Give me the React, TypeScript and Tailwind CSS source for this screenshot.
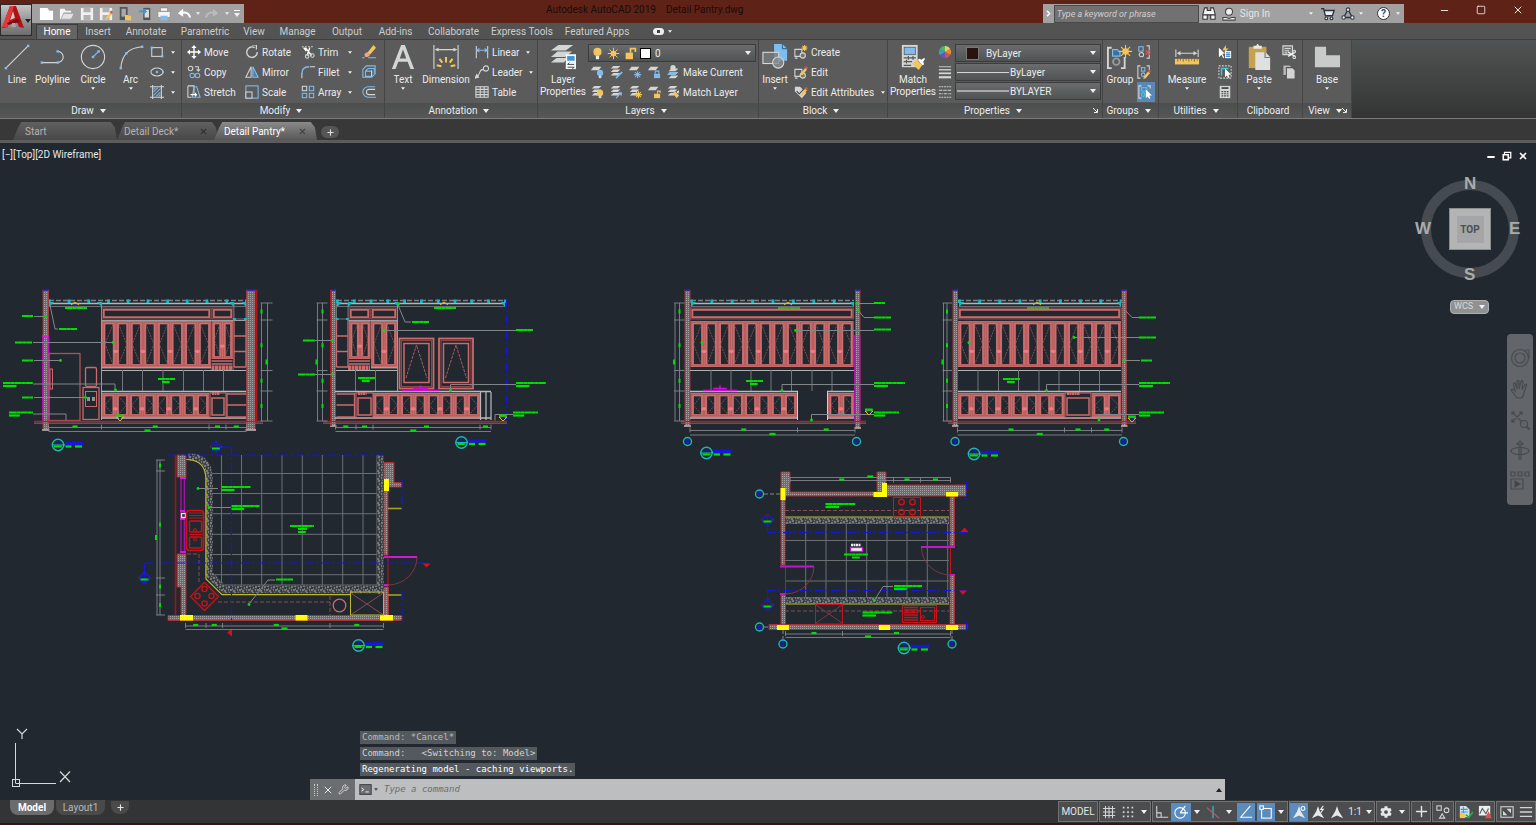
import type { ReactNode } from "react";
import { ChevronRight, Minus, Plus, Square, Wrench, X } from "lucide-react";
import { FaCog } from "react-icons/fa";

const G = "#d4d6d6";
const B = "#7fbdf0";
const Y = "#f3c55c";
const R = "#d9544f";

/* ---------- icons ---------- */

function Ico({ w = 14, h = w, vb = "0 0 16 16", children }: { w?: number; h?: number; vb?: string; children: ReactNode }) {
  return (
    <svg width={w} height={h} viewBox={vb} fill="none" stroke={G} strokeWidth="1.2" className="shrink-0" aria-hidden>
      {children}
    </svg>
  );
}

function Dot({ x, y }: { x: number; y: number }) {
  return <rect x={x - 1.3} y={y - 1.3} width="2.6" height="2.6" fill={B} stroke="none" />;
}

function Caret({ big }: { big?: boolean }) {
  return (
    <svg width={big ? 6 : 4} height={big ? 4 : 3} viewBox="0 0 6 4" className="shrink-0" aria-hidden>
      <path d="M0 0h6L3 4z" fill="#f0f0f0" />
    </svg>
  );
}

const Sheets = () => (
  <g fill={G} stroke="none">
    <path d="M5 1h8l-3 3H2zM5 5h8l-3 3H2zM5 9h8l-3 3H2z" />
  </g>
);
const Sheet = () => <path d="M4 2h9l-3 4H1z" fill={G} stroke="none" />;
const Bulb = ({ c = Y }: { c?: string }) => (
  <g stroke="none">
    <circle cx="11.5" cy="9" r="3.6" fill={c} />
    <path d="M10 12h3v3h-3z" fill={G} />
  </g>
);
const Sun = ({ cx = 12, cy = 11, r = 2 }: { cx?: number; cy?: number; r?: number }) => (
  <g stroke={Y} fill={Y}>
    <circle cx={cx} cy={cy} r={r} stroke="none" />
    <path d={`M${cx} ${cy - 2 * r}V${cy + 2 * r}M${cx - 2 * r} ${cy}H${cx + 2 * r}M${cx - 1.4 * r} ${cy - 1.4 * r}L${cx + 1.4 * r} ${cy + 1.4 * r}M${cx + 1.4 * r} ${cy - 1.4 * r}L${cx - 1.4 * r} ${cy + 1.4 * r}`} />
  </g>
);
const Pencil = () => (
  <g stroke="none">
    <path d="M8 10l5-6 2 2-5 6-3 1z" fill={Y} />
    <path d="M12 4l2-2 2 2-1.5 2z" fill={R} />
  </g>
);

const icons: Record<string, ReactNode> = {
  line: <><path d="M2 26L26 2" /><Dot x={2} y={26} /><Dot x={26} y={2} /></>,
  polyline: <><path d="M2 20h17a6 6 0 0 0 0-12" /><Dot x={2} y={20} /><Dot x={19} y={20} /><Dot x={19} y={8} /></>,
  circle: <><circle cx="14" cy="14" r="12.5" /><path d="M14 14l6-6" stroke={B} /><Dot x={14} y={14} /><Dot x={20} y={8} /></>,
  arc: <><path d="M3 26C4 12 12 4 26 3" /><Dot x={3} y={26} /><Dot x={9} y={10} /><Dot x={26} y={3} /></>,
  rect: <><rect x="2" y="3" width="12" height="10" /><Dot x={2} y={3} /><Dot x={14} y={13} /></>,
  ellipse: <><ellipse cx="8" cy="8" rx="7" ry="4.5" /><Dot x={8} y={8} /><Dot x={15} y={8} /></>,
  hatch: <><path d="M3 0v16M13 0v16M0 2h16M0 14h16" /><path d="M4 8l5-5M4 12l8-8M7 13l5-5M4 5l2-2M10 13l2-2" stroke={B} /></>,
  move: <><path d="M8 1v14M1 8h14" stroke="#fff" strokeWidth="1.6" /><path d="M8 0l3 3.5H5zM8 16l3-3.5H5zM0 8l3.5-3v6zM16 8l-3.5-3v6z" fill="#fff" stroke="none" /></>,
  copy: <><circle cx="4" cy="4" r="2.6" /><path d="M9 2h4v5M11 5l2 2 2-2" /><circle cx="6" cy="12" r="2.6" stroke={B} /><circle cx="12" cy="12" r="2.6" stroke={B} /></>,
  stretch: <><path d="M1 1h7v9M1 1v13h4" /><path d="M8 2h3l4 12H6z" stroke={B} /><path d="M4 11h7M9 9l2 2-2 2" stroke="#fff" /></>,
  rotate: <><path d="M11 3a6 6 0 1 0 3 5" strokeWidth="1.6" /><path d="M8 0h5v5" strokeWidth="1.4" /></>,
  mirror: <><path d="M7 2v12H1z" /><path d="M9 2v12h6z" stroke={B} fill="#4f7ea8" /></>,
  scale: <><rect x="1" y="1" width="14" height="14" stroke={B} /><rect x="1" y="8" width="7" height="7" fill="#5b5b5b" /></>,
  trim: <><path d="M1 2h14" strokeDasharray="2 1.5" /><path d="M5 3l7 9M10 3L7 12M3 3l3 4" stroke="#fff" strokeWidth="1.6" /><circle cx="7" cy="13" r="2" /><circle cx="13" cy="12" r="2" /></>,
  fillet: <><path d="M1 15V9" stroke={G} /><path d="M1 10C1 5 4 2 9 2" stroke={B} strokeWidth="1.5" /><path d="M10 2h6" /></>,
  array: <><rect x="1.5" y="1.5" width="5" height="5" /><rect x="9.5" y="1.5" width="5" height="5" stroke={B} /><rect x="1.5" y="9.5" width="5" height="5" stroke={B} /><rect x="9.5" y="9.5" width="5" height="5" stroke={B} /></>,
  erase: <><path d="M6 9l7-9 3 3-7 8z" fill={Y} stroke="none" /><path d="M3 10l3-2 3 4-3 2-3-1z" fill="#f0a090" stroke="none" /><path d="M0 14.5h3M7 14.5h9" stroke={B} /></>,
  explode: <><path d="M1 5l4-4h10v9l-4 4H1z" stroke={B} /><path d="M4 7h7v6H4zM4 7l3-3h7v6" stroke={B} /><path d="M11 6V13" /></>,
  offset: <><path d="M15 2H7a6 6 0 0 0 0 12h9" stroke={B} /><path d="M15 5H8a3 3 0 0 0 0 6h7" /></>,
  text: <path d="M2 27L12 1h4l10 26h-4l-3-8H9l-3 8zM10.5 15.5h7L14 6z" fill={G} fillRule="evenodd" stroke="none" />,
  dim: <><path d="M1 1v26M27 1v26M3 6h22" /><path d="M2 6l4-2v4zM26 6l-4-2v4z" fill={G} stroke="none" /><path d="M14 14v6M7 16l3 4M21 16l-3 4M4 23l5 1M24 23l-5 1" stroke={Y} strokeWidth="2.2" /></>,
  linear: <><path d="M1.5 1v14M14.5 1v14" /><path d="M2 6h12M5 4L2 6l3 2M11 4l3 2-3 2" stroke={B} /></>,
  leader: <><circle cx="12.5" cy="4" r="3" /><path d="M9.5 5C4 5 7 10 2 14" /><path d="M0 15l2-4 2 3z" fill={G} /></>,
  table: <><rect x="1" y="2" width="14" height="12" /><path d="M1 5h14M1 8h14M1 11h14M6 2v12M10.5 2v12" /></>,
  layerProps: <><g fill={G} stroke="none"><path d="M9 1h16l-8 6H1zM8 8h16l-8 6H1zM7 15h12l-4 5H1z" /></g><rect x="17" y="11" width="11" height="16" fill="#f4f6f8" stroke="none" /><rect x="18.5" y="13" width="8" height="5" fill="#3f94d8" stroke="none" /><path d="M19 22h7M21 20l-2 2M19 25h7M24 27l2-2" stroke="#333" strokeWidth=".9" /></>,
  layerOff: <><Sheet /><Bulb c={B} /></>,
  layerIsolate: <><Sheets /><path d="M8 15l7-7" stroke={B} strokeWidth="2" /></>,
  layerFreeze: <><Sheet /><path d="M11 7v8M7 11h8M8 8l6 6M14 8l-6 6" stroke={B} /></>,
  layerLock: <><Sheet /><rect x="8" y="10" width="7" height="5" fill={B} stroke="none" /><path d="M9.5 10V7h4v3" stroke={B} /></>,
  makeCurrent: <><g transform="translate(1 3)"><Sheets /></g><path d="M4 8h9l-3 3H1z" fill={B} stroke="none" /><circle cx="8" cy="3" r="3" fill={G} stroke="none" /></>,
  layerOn: <><Sheets /><Bulb /></>,
  layerUnisolate: <><Sheets /><path d="M8 15l6-6M11 9h3v3" stroke={B} strokeWidth="1.5" /></>,
  layerThaw: <><Sheets /><Sun /></>,
  layerUnlock: <><Sheet /><rect x="8" y="10" width="7" height="5" fill={Y} stroke="none" /><path d="M12 10V7h3v2" stroke={Y} /></>,
  matchLayer: <><Sheets /><path d="M8 9l2-2 5 5-3 3z" fill={Y} stroke="none" /><path d="M12 8l3-2-1 4z" fill="#fff" stroke="none" /></>,
  insert: <><path d="M13 0h9l5 5v13H13z" fill={B} stroke="none" /><path d="M22 0v5h5" stroke="#3c6d96" /><rect x="1" y="9" width="17" height="12" fill="#777b7d" fillOpacity=".8" /><circle cx="17.5" cy="20" r="6" fill="#8a8e90" fillOpacity=".8" /></>,
  create: <><path d="M1 5h8v8H1zM1 15h3" /><circle cx="10" cy="12" r="3" fill="#777" /><Sun cx={12} cy={3.5} r={1.7} /></>,
  edit: <><path d="M1 5h8v8H1zM1 15h3" /><circle cx="10" cy="12" r="3" fill="#777" /><g transform="translate(0 -1)"><Pencil /></g></>,
  editAttr: <><path d="M1 2h6l7 7-5 6-8-8z" fill={G} stroke="none" /><path d="M3 7l3 3 5-5" stroke="#444" /><Pencil /></>,
  match: <><rect x="2" y="1" width="17" height="24" fill={G} stroke="none" /><rect x="4.5" y="3.5" width="12" height="8" fill={B} stroke="#555" strokeWidth=".8" /><path d="M4 15h13M4 19h9M9 13v4M14 13v4M7 17v4M4 23h8" stroke="#555" /><path d="M13 21l5-4 6 6-4 5z" fill={Y} stroke="none" /><path d="M19 17l2-1 2 1 3-2 1 1-2 3 1 3-2 1z" fill="#fff" stroke="none" /></>,
  wheel: <g stroke="none"><path d="M8 8V1a7 7 0 0 1 6 3.5z" fill="#f0d24a" /><path d="M8 8l6-3.5a7 7 0 0 1 0 7z" fill="#e58a3c" /><path d="M8 8l6 3.5A7 7 0 0 1 8 15z" fill="#d0505c" /><path d="M8 8v7a7 7 0 0 1-6-3.5z" fill="#6c4fb8" /><path d="M8 8l-6 3.5a7 7 0 0 1 0-7z" fill="#37a0c8" /><path d="M8 8L2 4.5A7 7 0 0 1 8 1z" fill="#4bb36b" /></g>,
  weights: <><path d="M1 2h14" strokeWidth="1" /><path d="M1 5.5h14" strokeWidth="1.5" /><path d="M1 9.5h14" strokeWidth="2" /><path d="M1 14h14" strokeWidth="2.5" /></>,
  types: <><path d="M1 2h14M1 14h14" strokeDasharray="2 1" /><path d="M1 6h14" strokeDasharray="4 1" /><path d="M1 10h14" strokeDasharray="3 1 1 1" /></>,
  group: <><path d="M5 4H1v22h4M15 26h4V14" strokeWidth="2" /><path d="M6 6h5l3 3v4H6z" stroke={B} fill="#3e6f9a" /><circle cx="10" cy="19" r="3.5" strokeWidth="2" stroke="#999" /><Sun cx={20} cy={8} r={3.5} /></>,
  ungroup: <><circle cx="5" cy="11" r="2.5" /><rect x="2" y="2" width="5" height="5" stroke={B} /><path d="M11 1h3v14h-3" /><path d="M10 6l5 5M15 6l-5 5" stroke={R} strokeWidth="1.8" /></>,
  groupEdit: <><path d="M4 1H1v14h3M11 1h3v6" /><rect x="5" y="3" width="4" height="4" stroke={B} /><circle cx="7" cy="11" r="2" stroke={B} /><g transform="translate(0 3)"><Pencil /></g></>,
  groupSel: <><path d="M4 1H1v14h3M11 1h3v3" /><rect x="4" y="3" width="6" height="4" stroke="#35d0d8" /><circle cx="6" cy="11" r="2" stroke="#35d0d8" /><path d="M9 5v10l2-2 2 3 1-1-1-3h3z" fill="#fff" stroke="none" /></>,
  measure: <><path d="M2 6v8M26 6v8M4 10h20" /><path d="M3 10l4-2.5v5zM25 10l-4-2.5v5z" fill={G} stroke="none" /><rect x="1" y="16" width="26" height="6" fill={Y} stroke="none" /><path d="M4 16v3M7 16v2M10 16v3M13 16v2M16 16v3M19 16v2M22 16v3M25 16v2" stroke="#6a5520" strokeWidth=".8" /></>,
  quick: <><path d="M1 3v11l3-3 2 4 1-1-2-4h3z" fill="#fff" stroke="none" /><path d="M9 0L5 6h3L7 9l5-5H9z" fill={Y} stroke="none" /><rect x="8" y="7" width="7" height="8" fill="#fff" stroke="none" /><path d="M9 9h5M9 11h5M9 13h5" stroke="#3f94d8" /></>,
  selall: <><rect x="1" y="1" width="14" height="14" strokeDasharray="2 1.5" /><path d="M4 12V4h8" stroke="#35d0d8" strokeWidth="1.6" /><path d="M8 4v10l2-2 2 3 1-1-1-3h3z" fill="#fff" stroke="none" /></>,
  calc: <><rect x="2" y="1" width="12" height="14" fill={G} stroke="none" /><path d="M4 3.5h8" stroke="#444" strokeWidth="2" /><path d="M4 7.5h8M4 10h8M4 12.5h8" stroke="#444" strokeDasharray="2 1" strokeWidth="1.4" /></>,
  paste: <><rect x="3" y="3" width="19" height="23" fill="#c9a04e" stroke="none" /><path d="M8 5V2h3l1-2h1l1 2h3v3z" fill="#e8e8e8" stroke="none" /><path d="M10 9h11l5 5v14H10z" fill="#dfe1e1" stroke="none" /><path d="M20.5 9v5.5H26" stroke="#777" /></>,
  cut: <><path d="M1 1h11v10H1z" fill="#777" stroke={G} /><path d="M3 4h7M3 6.5h5M3 9h3" stroke={G} /><path d="M7 8l8 5M7 13l8-5" stroke="#f2f2f2" strokeWidth="1.5" /><circle cx="14" cy="14" r="1.5" /><circle cx="14" cy="7.5" r="1.5" /></>,
  clip: <><path d="M1 0h8l2 2v10H1z" fill="#bbb" stroke="#555" /><path d="M5 3h7l3 3v10H5z" fill={G} stroke="#555" /></>,
  base: <path d="M1 3h12v9h15v13H1z" fill="#c9cbcb" stroke="none" />,
};

function Big({ icon, label, caret, w }: { icon: string; label: string; caret?: boolean; w: string }) {
  return (
    <button className={`flex flex-col items-center pt-1 ${w} shrink-0`}>
      <Ico w={26} vb="0 0 28 28">{icons[icon]}</Ico>
      <span className="mt-1 leading-3">{label}</span>
      {caret && <span className="mt-px"><Caret /></span>}
    </button>
  );
}

function Small({ icon, label, caret }: { icon: string; label?: string; caret?: boolean }) {
  return (
    <button className="flex h-5 items-center gap-[3px] whitespace-nowrap" aria-label={label ?? icon}>
      <Ico>{icons[icon]}</Ico>
      {label && <span className="grow text-left">{label}</span>}
      {caret && <span className="pl-1"><Caret /></span>}
    </button>
  );
}

function Stack({ w, children }: { w: string; children: ReactNode }) {
  return <div className={`flex flex-col pt-0.5 shrink-0 ${w}`}>{children}</div>;
}

function Panel({ title, w, caret = true, launcher, children }: { title: string; w: string; caret?: boolean; launcher?: boolean; children: ReactNode }) {
  return (
    <section className={`flex flex-col shrink-0 border-r border-[#454545] bg-[#5b5b5b] ${w}`}>
      <div className="flex h-[63px] overflow-hidden">{children}</div>
      <button className="flex h-[15px] items-center bg-linear-to-b from-[#4c4e4e] to-[#575757]">
        <span className="grow basis-0" />
        {title}
        {caret && <span className="pl-1.5"><Caret big /></span>}
        <span className="flex grow basis-0 justify-end pr-1">
          {launcher && (
            <svg width="5" height="5" viewBox="0 0 5 5" aria-hidden>
              <path d="M0 0l4 4M4.5 1v3.5H1" stroke="#eee" fill="none" />
            </svg>
          )}
        </span>
      </button>
    </section>
  );
}

function Combo({ label, value, children }: { label: string; value: string; children?: ReactNode }) {
  return (
    <div className="flex h-[18px] items-center border border-[#3a3c3d] bg-linear-to-b from-[#6a6c6d] to-[#505354] pr-1">
      {children}
      <select aria-label={label} className="min-w-0 grow appearance-none bg-transparent outline-none">
        <option>{value}</option>
      </select>
      <Caret big />
    </div>
  );
}

/* ---------- drawing ---------- */

const BG = "#212830";
const SALMON = "#cb6a6a";
const GREEN = "#00e000";
const BLUE = "#1616e0";
const CYAN = "#18b8c0";
const LINE = "#82868a";

function Label({ x, y, w, rows = 1 }: { x: number; y: number; w: number; rows?: number }) {
  return (
    <g stroke={GREEN} strokeWidth="2.2">
      <path d={`M${x} ${y}h${w}`} strokeDasharray="7 .2 4 .2" />
      {rows > 1 && <path d={`M${x + (w > 20 ? 0 : 4)} ${y + 3}h${w * 0.45}`} />}
    </g>
  );
}

function Leader({ d, x, y }: { d: string; x: number; y: number }) {
  return (
    <g>
      <path d={d} stroke={LINE} />
      <circle cx={x} cy={y} r="1.4" fill={GREEN} />
    </g>
  );
}

function Doors({ x, y, w, h, n }: { x: number; y: number; w: number; h: number; n: number }) {
  const step = w / n;
  return (
    <g>
      <rect x={x} y={y} width={w} height={h} fill={SALMON} />
      {Array.from({ length: n }, (_, i) => {
        const l = x + i * step;
        const px = l + 3;
        const pw = step - 5.5;
        const py = y + 3;
        const ph = h - 5.5;
        const left = i % 2 === 0;
        const tip = left ? px : px + pw;
        const base = left ? px + pw : px;
        return (
          <g key={i}>
            <rect x={l + 1} y={y + 1.2} width={step - 1.5} height={h - 2.4} stroke="#a05255" strokeWidth=".5" />
            <rect x={px} y={py} width={pw} height={ph} fill={BG} stroke="#e07c7c" strokeWidth=".6" />
            <path d={`M${base} ${py}L${tip} ${py + ph / 2}L${base} ${py + ph}`} stroke="#a85b5d" strokeWidth=".7" strokeDasharray="2 1" />
            <circle cx={left ? l + step - 0.8 : l + 0.8} cy={y + h * 0.66} r="1.7" fill="#ec7e7e" />
          </g>
        );
      })}
    </g>
  );
}

function Frame({ x, y, w, h, t = 1.8 }: { x: number; y: number; w: number; h: number; t?: number }) {
  return (
    <g>
      <rect x={x} y={y} width={w} height={h} stroke="#a35558" strokeWidth=".8" />
      <rect x={x + 1.8} y={y + 1.8} width={w - 3.6} height={h - 3.6} stroke={SALMON} strokeWidth={t} />
    </g>
  );
}

function Column({ x, y, w, h }: { x: number; y: number; w: number; h: number }) {
  return (
    <g>
      <rect x={x} y={y} width={w} height={h} fill="url(#hatch)" stroke="#a83a3c" strokeWidth=".9" />
      <path d={`M${x} ${y}h${w}`} stroke={BLUE} strokeWidth="1.5" />
      <path d={`M${x - 1} ${y + h}h${w + 2}`} stroke="#c8c8c8" strokeWidth="1.3" />
    </g>
  );
}

function Ceiling({ x1, x2, step, mark }: { x1: number; x2: number; step: number; mark: number }) {
  const count = Math.floor((x2 - x1) / step) + 1;
  return (
    <g>
      <path d={`M${x1} 300.5H${x2}`} stroke="#7b7f82" strokeDasharray="5 2" strokeWidth="1.5" />
      <path d={`M${x1} 303.5H${x2}`} stroke="#b4b6b6" strokeWidth="1.7" />
      <path d={`M${x1} 306.5H${x2}`} stroke="#6a6e72" />
      {Array.from({ length: count }, (_, i) => (
        <rect key={i} x={x1 - 1 + i * step} y="299.5" width="2.8" height="3.5" fill={CYAN} />
      ))}
      <path d={`M${x1} 302h5l-5 5zM${x2} 302h-4l4 5z`} fill={CYAN} />
      <path d={`M${mark - 4} 305l4-3 4 3`} stroke="#d8c020" />
      <path d={`M${mark - 2} 305.5l2-1.5 2 1.5z`} fill={BLUE} />
      <Label x={mark - 10} y={308} w={22} />
    </g>
  );
}

function Splash({ x1, x2, xs }: { x1: number; x2: number; xs: number[] }) {
  return (
    <g>
      <path d={`M${x1} 370.5H${x2}`} stroke="#b0b2b2" strokeWidth="1.2" />
      {xs.map((x) => (
        <path key={x} d={`M${x} 370V391`} stroke="#73777a" />
      ))}
    </g>
  );
}

function Counter({ x1, x2 }: { x1: number; x2: number }) {
  return <path d={`M${x1} 391.5H${x2}M${x1} 418H${x2}`} stroke="#b9bbbb" strokeWidth="1.4" />;
}

function Shelves({ x, w }: { x: number; w: number }) {
  return (
    <g stroke={SALMON} strokeWidth="1.3">
      <path d={`M${x} 320V367M${x + w} 320V367M${x} 336h${w}M${x} 351.5h${w}M${x} 367h${w}`} />
      <path d={`M${x} 303v16h${w}V303`} stroke={LINE} strokeWidth=".8" />
      <path d={`M${x - 1} 319h3M${x + w - 2} 319h3`} stroke={CYAN} strokeWidth="2" />
    </g>
  );
}

function Oven({ x, w }: { x: number; w: number }) {
  return (
    <g stroke={SALMON}>
      <rect x={x} y="393" width={w} height="25" />
      <rect x={x + 2} y="398" width={w - 4} height="17" strokeWidth="1.5" />
      <path d={`M${x + 2} 393.5h${w * 0.5}`} strokeWidth="3" strokeDasharray="2 .5" />
    </g>
  );
}

function Floor({ x1, x2 }: { x1: number; x2: number }) {
  return (
    <g>
      <path d={`M${x1} 421.5H${x2}`} stroke="#c01a20" strokeWidth="1.3" />
      <path d={`M${x1} 423.2H${x2}`} stroke="#7b6a6a" />
    </g>
  );
}

function HDim({ x1, x2, y1, y2, ticks }: { x1: number; x2: number; y1: number; y2: number; ticks: number[] }) {
  const all = [x1, ...ticks, x2];
  return (
    <g stroke={LINE} strokeWidth=".9">
      <path d={`M${x1} ${y1}H${x2}M${x1} ${y2}H${x2}`} />
      {all.map((x) => (
        <path key={x} d={`M${x} ${y1 - 3}V${y1 + 2}`} />
      ))}
      {all.slice(1).map((x, i) => (
        <Label key={x} x={(x + all[i]) / 2 - 2.5} y={y1 - 1} w={5} />
      ))}
      <Label x={(x1 + x2) / 2 - 3} y={y2 - 1} w={6} />
    </g>
  );
}

function VDim({ xa, xb, y1, y2, ticks }: { xa: number; xb: number; y1: number; y2: number; ticks: number[] }) {
  const all = [y1, ...ticks, y2];
  return (
    <g stroke={LINE} strokeWidth=".9">
      <path d={`M${xa} ${y1}V${y2}M${xb} ${y1}V${y2}`} />
      {all.map((y) => (
        <path key={y} d={`M${Math.min(xa, xb) - 1} ${y}H${Math.max(xa, xb) + 5}`} />
      ))}
      <g stroke={GREEN} strokeWidth="2">
        {all.slice(1).map((y, i) => (
          <path key={y} d={`M${xb} ${(y + all[i]) / 2 - 2}v4`} />
        ))}
        <path d={`M${xa - 1} ${(y1 + y2) / 2 - 2.5}v5`} />
      </g>
    </g>
  );
}

function Bubble({ x, y }: { x: number; y: number }) {
  return (
    <g>
      <circle cx={x} cy={y} r="4" stroke={CYAN} strokeWidth="1.4" />
      <path d={`M${x} ${y - 2}v4`} stroke={BLUE} strokeWidth="2.4" />
    </g>
  );
}

function Title({ x, y }: { x: number; y: number }) {
  return (
    <g>
      <circle cx={x} cy={y} r="5.7" stroke={CYAN} strokeWidth="1.4" />
      <path d={`M${x - 6} ${y}h13`} stroke={CYAN} />
      <path d={`M${x} ${y - 4}v3`} stroke={BLUE} strokeWidth="1.8" />
      <path d={`M${x + 7} ${y - 1.5}h18`} stroke={BLUE} strokeWidth="3.4" />
      <Label x={x - 4} y={y + 1.5} w={8} />
      <Label x={x + 7.5} y={y + 1.5} w={6} />
      <Label x={x + 17} y={y + 1.5} w={7} />
    </g>
  );
}

function Level({ x, y }: { x: number; y: number }) {
  return (
    <g>
      <path d={`M${x - 4} ${y}h8l-4 4z`} stroke="#d8c020" />
      <path d={`M${x - 2} ${y}h4l-2 2.5z`} fill={BLUE} />
      <Label x={x - 4} y={y - 1.5} w={8} />
    </g>
  );
}

function Section({ x, y }: { x: number; y: number }) {
  return (
    <g>
      <path d={`M${x - 6} ${y}l6-6 6 6-6 6z`} stroke="#6b3038" />
      <circle cx={x} cy={y} r="4.5" stroke={BLUE} strokeWidth="1.5" />
      <path d={`M${x} ${y - 6}V${y + 6}`} stroke={BLUE} />
      <Label x={x - 4} y={y + 1.5} w={8} />
    </g>
  );
}

function Sink({ x, y, w }: { x: number; y: number; w: number }) {
  return (
    <g stroke="#d010d0">
      <path d={`M${x} ${y}h${w}`} strokeWidth="1.7" />
      <path d={`M${x + w * 0.3} ${y - 2}h${w * 0.4}M${x + w * 0.5} ${y - 5}v4`} strokeWidth="1.5" />
    </g>
  );
}

function Elevations() {
  return (
    <g>
      {/* elevation A */}
      <Ceiling x1={49} x2={246} step={19.7} mark={75} />
      <Column x={43} y={290} w={5.5} h={140} />
      <path d="M43 335V422M48.5 335V422" stroke="#c012c0" strokeWidth="1.7" />
      <path d="M43 336h5" stroke="#e020e0" strokeWidth="2" />
      <Column x={246.5} y={290} w={8.5} h={140} />
      <path d="M256.5 290V422" stroke="#b81218" strokeWidth="1.8" />
      <path d="M101.5 303V420M101.5 320.5H246" stroke="#9a9ea0" />
      <path d="M97 302h5v5zM229 302h5v5z" fill={CYAN} />
      <Frame x={102} y={308} w={109} h={11} />
      <Frame x={212} y={308} w={21} h={11} />
      <Doors x={102} y={321} w={109} h={46} n={8} />
      <Doors x={211.5} y={321} w={21.5} h={38} n={2} />
      <path d="M211.5 361h21M211.5 364h21" stroke={SALMON} strokeWidth="1.5" />
      <path d="M211.5 368h22" stroke={SALMON} strokeWidth="5" strokeDasharray="3 .5" />
      <Shelves x={234} w={12} />
      <path d="M102 367.8h109" stroke="#d8d8d8" />
      <Splash x1={102} x2={246} xs={[122.5, 142.5, 163, 183.5, 203.5, 223.5]} />
      <Counter x1={101} x2={246} />
      <Doors x={102} y={393} w={107} h={24} n={8} />
      <Oven x={210} w={16} />
      <path d="M227 393v25M227 405h19M227 417h19M227 394h19" stroke={SALMON} strokeWidth="1.3" />
      <rect x="49" y="353.5" width="31" height="67" stroke="#a85558" strokeWidth="1.3" />
      <rect x="50" y="369" width="2.5" height="20" stroke={SALMON} />
      <rect x="85.5" y="367.5" width="11" height="19" rx="1.5" stroke={SALMON} strokeWidth="1.3" />
      <rect x="83" y="387.5" width="16" height="32" stroke={SALMON} strokeWidth="1.3" />
      <rect x="85.5" y="391.5" width="11" height="15" stroke={SALMON} />
      <path d="M87 397h3v4h-3zM92 397h3v4h-3z" fill="#8f9494" />
      <Floor x1={34} x2={263} />
      <HDim x1={48.5} x2={246.5} y1={427.5} y2={431.5} ticks={[101.5, 209, 226]} />
      <VDim xa={267.5} xb={261.5} y1={303} y2={421} ticks={[320, 370.5, 391]} />
      <Label x={22} y={316} w={11} />
      <Label x={15} y={342.5} w={17} />
      <Label x={22} y={360.5} w={11} />
      <Label x={3} y={383} w={30} rows={2} />
      <Label x={22} y={397.5} w={11} />
      <Label x={9} y={412.5} w={24} rows={2} />
      <Label x={59} y={329} w={18} />
      <Label x={158} y={379} w={17} rows={2} />
      <Leader d="M34 316.5h11" x={45.5} y={316.5} />
      <Leader d="M33 342.5h79" x={113} y={342.5} />
      <Leader d="M34 360.5h26" x={60.5} y={360.5} />
      <Leader d="M33 384h82v6" x={115.5} y={390} />
      <Leader d="M34 397.5h51" x={85.5} y={397.5} />
      <path d="M33 414h33v6M58 329h-3l-5-24" stroke={LINE} />
      <Level x={120} y={417} />
      <Title x={58} y={445} />

      {/* elevation B */}
      <Ceiling x1={337} x2={505} step={16.8} mark={444} />
      <Column x={331} y={290} w={4.5} h={136} />
      <path d="M331 290V426" stroke="#d01418" strokeWidth="1.4" />
      <path d="M506.5 299V429" stroke={BLUE} strokeWidth="1.4" strokeDasharray="8 3 2 3" />
      <Shelves x={336.5} w={11.5} />
      <path d="M348.5 320.5H397M397.5 303V391" stroke="#9a9ea0" />
      <path d="M348 302h5l-5 5zM394 302h4v5z" fill={CYAN} />
      <Frame x={349} y={308} w={21} h={11} />
      <Frame x={371} y={308} w={26} h={11} />
      <Doors x={349} y={321} w={21.5} h={38} n={2} />
      <path d="M349 361h21M349 364h21" stroke={SALMON} strokeWidth="1.5" />
      <path d="M348 368h22" stroke={SALMON} strokeWidth="5" strokeDasharray="3 .5" />
      <Doors x={371} y={321} w={26} h={46} n={2} />
      <path d="M371 367.8h26" stroke="#d8d8d8" />
      <Splash x1={336} x2={397} xs={[355.5, 375.5]} />
      {[399, 438.5].map((x) => (
        <g key={x}>
          <rect x={x + 0.5} y="338.5" width="34" height="50" stroke={SALMON} strokeWidth="1.8" />
          <rect x={x + 2.5} y="340.5" width="30" height="46" stroke="#8c484b" />
          <rect x={x + 5} y="343.5" width="25" height="39" stroke={SALMON} strokeWidth="1.5" />
          <path d={`M${x + 7} 378L${x + 17.5} 345L${x + 28} 378`} stroke="#a85b5d" strokeDasharray="3 1" />
        </g>
      ))}
      <Counter x1={335} x2={491} />
      <Sink x={402} y={390.5} w={37} />
      <path d="M336.5 394h18M336.5 405h18M336.5 417h18M354.5 393v25" stroke={SALMON} strokeWidth="1.3" />
      <Oven x={356} w={17} />
      <Doors x={373} y={393} w={107} h={24} n={8} />
      <path d="M480.5 392v28M486 392v28M491 392v28" stroke="#b9bbbb" strokeWidth="1.2" />
      <Floor x1={323} x2={507} />
      <HDim x1={335.5} x2={491} y1={427.5} y2={431.5} ticks={[356, 373, 480]} />
      <VDim xa={317.5} xb={322.5} y1={303} y2={421} ticks={[320, 370.5, 391]} />
      <Label x={303} y={340.5} w={12} />
      <Label x={298} y={374.5} w={17} />
      <Leader d="M315 340.5h17" x={332.5} y={340.5} />
      <Leader d="M315 374.5h17" x={332.5} y={374.5} />
      <Label x={412} y={322} w={17} />
      <Leader d="M411 322h-6l-7-17" x={398.5} y={304} />
      <Leader d="M384 330.5h132" x={384} y={330.5} />
      <Label x={516} y={330} w={17} />
      <Leader d="M516 384.5h-65.5v6" x={450.5} y={390.5} />
      <Label x={516} y={383} w={30} rows={2} />
      <path d="M513 414.5h-18v6" stroke={LINE} />
      <Label x={513} y={412.5} w={25} rows={2} />
      <Label x={358} y={378} w={17} rows={2} />
      <Level x={503} y={417} />
      <Title x={461.5} y={442.5} />

      {/* elevation C */}
      <Ceiling x1={691} x2={854} step={20.4} mark={788} />
      <Column x={685} y={290} w={5} h={136} />
      <Column x={855.5} y={290} w={4.5} h={138} />
      <path d="M855 335V421M859.5 335V421" stroke="#c012c0" strokeWidth="1.7" />
      <Frame x={690.5} y={308} w={163} h={11} t={2} />
      <Doors x={690.5} y={321} w={163} h={46} n={12} />
      <Splash x1={690} x2={854} xs={[711, 731, 751, 771, 791.5, 812, 832]} />
      <Counter x1={690} x2={798} />
      <Counter x1={827} x2={854} />
      <path d="M797.5 391v29M827.5 391v29" stroke="#d0d0d0" />
      <Sink x={703} y={390.5} w={34} />
      <Doors x={690.5} y={393} w={106.5} h={24} n={8} />
      <Doors x={828} y={393} w={26} h={24} n={2} />
      <Floor x1={681} x2={866} />
      <HDim x1={690} x2={855} y1={430.5} y2={435} ticks={[797.5]} />
      <VDim xa={675} xb={679.5} y1={303} y2={421} ticks={[320, 370.5, 391]} />
      <Bubble x={687.5} y={441.5} />
      <Bubble x={856.5} y={441.5} />
      <Label x={874} y={303} w={11} />
      <Label x={874} y={317.5} w={17} />
      <Label x={874} y={329.5} w={17} />
      <Label x={874} y={383} w={31} rows={2} />
      <Label x={874} y={412.5} w={25} rows={2} />
      <Label x={746} y={381} w={17} rows={2} />
      <Leader d="M857 303.5h17" x={857} y={303.5} />
      <Leader d="M858 310l6 7.5h10" x={858} y={310} />
      <Leader d="M795 330.5h79" x={795.5} y={330.5} />
      <Leader d="M874 384.5h-92v6" x={782} y={390.5} />
      <Leader d="M874 414.5h-62.5v6" x={811.5} y={420} />
      <circle cx="702" cy="342.5" r="1.5" fill={GREEN} />
      <Level x={869} y={411} />
      <Title x={706.5} y={453} />

      {/* elevation D */}
      <Ceiling x1={959} x2={1121} step={20.2} mark={1037} />
      <Column x={953} y={290} w={4.5} h={136} />
      <Column x={1122} y={290} w={4.5} h={136} />
      <Frame x={958} y={308} w={163} h={11} t={2} />
      <Doors x={958} y={321} w={163} h={46} n={12} />
      <Splash x1={958} x2={1121} xs={[978, 998.5, 1018.5, 1039, 1059, 1079.5, 1099.5]} />
      <Counter x1={958} x2={1121} />
      <Doors x={958} y={393} w={106.5} h={24} n={8} />
      <Oven x={1065} w={26} />
      <Doors x={1092} y={393} w={29} h={24} n={2} />
      <Floor x1={948} x2={1136} />
      <HDim x1={957.5} x2={1122} y1={430.5} y2={435} ticks={[1064.5, 1091.5]} />
      <VDim xa={943.5} xb={947} y1={303} y2={421} ticks={[320, 370.5, 391]} />
      <Bubble x={955} y={441.5} />
      <Bubble x={1123.5} y={441.5} />
      <Label x={1139} y={317.5} w={17} />
      <Label x={1139} y={337.5} w={17} />
      <Label x={1141} y={360.5} w={11} />
      <Label x={1139} y={383} w={31} rows={2} />
      <Label x={1139} y={412.5} w={25} rows={2} />
      <Label x={1003} y={379} w={17} rows={2} />
      <path d="M1126 311l6 6.5h7" stroke={LINE} />
      <Leader d="M1074 337.5h65" x={1074} y={337.5} />
      <Leader d="M1124 360.5h16" x={1124} y={360.5} />
      <Leader d="M1139 384.5h-92.5v6" x={1046.5} y={390.5} />
      <Leader d="M1139 414.5h-40v6" x={1099} y={420} />
      <circle cx="969" cy="342.5" r="1.5" fill={GREEN} />
      <Level x={1132} y={418} />
      <Title x={974} y={454} />
    </g>
  );
}

function Burners({ pts, r }: { pts: number[][]; r: number }) {
  return (
    <>
      {pts.map(([x, y]) => (
        <circle key={`${x}-${y}`} cx={x} cy={y} r={r} stroke="#c81418" strokeWidth="1.4" />
      ))}
    </>
  );
}

function Wall({ d }: { d: string }) {
  return <path d={d} fill="url(#hatch)" stroke="#b02c30" strokeWidth=".9" />;
}

function PlanLeft() {
  return (
    <g>
      <path d="M221.5 455V585M241.5 455V585M261.7 455V585M282 455V585M302.3 455V585M322.3 455V585M342.7 455V585M363 455V585M212 473.5H377M212 493.5H377M212 513.7H377M212 534.3H377M212 554.5H377M212 574.7H377M377 455V585H224" stroke="#6b6f72" />
      <path d="M188 457C204 457 209 465 209 479V574L224 589.5H384" stroke="url(#stone)" strokeWidth="7.5" />
      <path d="M380.5 455V594" stroke="url(#stone)" strokeWidth="6.5" />
      <path d="M186 459.5C200 459.5 206 467 206 480V579L222 594.7H350" stroke="#bdb82a" strokeWidth="1.2" />
      <path d="M187 554h12v28M218 602H330M330 596v19" stroke="#8a4a50" strokeDasharray="4 2" />
      <Wall d="M177 455h9v22h-9zM177 554h9v64h-5v-31h-4z" />
      <path d="M175.5 455V615" stroke="#a01418" strokeWidth="1.6" />
      <path d="M181 478V553M184.5 478V553" stroke="#a012a8" strokeWidth="1.4" />
      <path d="M180 478h6M180 552h6M180 519h5M180 511h5" stroke="#d818d8" strokeWidth="1.8" />
      <rect x="181.5" y="513.5" width="4" height="4" fill="#333" stroke="#eee" strokeWidth="1.3" />
      <g stroke="#c81418">
        <rect x="186.5" y="510.5" width="17" height="40" rx="3" strokeWidth="1.7" />
        <rect x="189.5" y="521" width="12" height="11" rx="1" strokeWidth="1.3" />
        <rect x="189.5" y="537" width="12" height="11" rx="1" strokeWidth="1.3" />
        <path d="M189 513h13M189 515.5h13M189 518h13M189 534.5h13" />
        <circle cx="195" cy="530" r="1.5" />
        <circle cx="195" cy="539.5" r="1.5" />
        <path d="M204.5 582.5l14 14-14 14-14-14z" strokeWidth="1.3" />
      </g>
      <Burners pts={[[204.5, 589], [211.5, 596], [204.5, 603.5], [197.5, 596]]} r={2.6} />
      <Wall d="M168 615.5h234v5H168z" />
      <Wall d="M384 462.5h10v20h8v4.500h-14v68h-4zM384 587h4.5v31h-4.5z" />
      <path d="M180 615h13v5.5h-13zM295.5 615h12v5.5h-12zM380 615h13v5.5h-13zM384 479h5v12h-5z" fill="#ffff00" />
      <path d="M388 508.5h14M388 595h14" stroke="#a8a428" strokeWidth="1.3" />
      <path d="M384 557h33" stroke="#d018d0" strokeWidth="2" />
      <path d="M384 585h5" stroke="#d018d0" strokeWidth="2" />
      <path d="M388 557v28" stroke="#c81418" />
      <path d="M417 557a29 28 0 0 1-29 28" stroke="#7a3a40" />
      <rect x="350.5" y="592" width="33" height="23" stroke="#bdb82a" />
      <path d="M352 594l30 20M382 594l-30 20" stroke="#8a4a50" />
      <circle cx="339.5" cy="605.5" r="6.3" stroke={SALMON} strokeWidth="1.3" />
      <g stroke={BLUE} strokeWidth="1.2" strokeDasharray="8 3 2 3">
        <path d="M168 455H384M145 563H430M231.5 447V625M402 480v32M402 592v32" />
      </g>
      <path d="M222 447h9M144.5 563v12" stroke={BLUE} />
      <Section x={216} y={447} />
      <Section x={144.5} y={578} />
      <path d="M422.5 563.5h8l-4 4zM232 628.5v8l-5-4z" fill="#d01418" />
      <VDim xa={157} xb={160} y1={460} y2={615} ticks={[471, 578, 595]} />
      <HDim x1={185.5} x2={383.5} y1={626} y2={629.5} ticks={[206, 222.5, 330]} />
      <Leader d="M218 488.5h-20" x={198} y={488.5} />
      <Label x={221.5} y={487} w={29} rows={2} />
      <Leader d="M231 507.5h-22" x={209} y={507.5} />
      <Label x={231.5} y={506} w={28} rows={2} />
      <Label x={290} y={526} w={24} />
      <Label x={298} y={529} w={9} />
      <Label x={298} y={532} w={8} />
      <Leader d="M275 580h-7l-19 24" x={249} y={604.5} />
      <Label x={276} y={579.5} w={17} />
      <Title x={358.5} y={645.5} />
    </g>
  );
}

function PlanRight() {
  return (
    <g>
      <path d="M805.7 523V597M826 523V597M846.3 523V597M866.7 523V597M887 523V597M907 523V597M927.3 523V597M947.7 523V597M785 540.5H949M785 560.5H949M785 581H949M785 523.5H949M785 597.5H949" stroke="#6b6f72" />
      <path d="M785 520.5h164M785 600.5h164" stroke="url(#stone)" strokeWidth="6" />
      <path d="M785 517h164M785 604h164" stroke="#bdb82a" strokeWidth="1.2" />
      <path d="M785 510.5h164M785 611h164" stroke="#8a4a50" strokeDasharray="4 2" />
      <Wall d="M781 472h9v20h87v-20h9v13h80v11H790h-5v69h-4zM781 595h4.5v33h-4.5zM950 496h4.5v50h-4.5zM950 575h4.5v50h-4.5z" />
      <Wall d="M769 624.5h198v5H769z" />
      <path d="M780.5 488h5v12h-5zM873.5 492h8.5v-9h5v14h-13.5zM946 492h12v4.5h-12zM777 625h12v5h-12zM879 625h11v5h-11zM946 625h12v5h-12z" fill="#ffff00" />
      <g stroke="#c81418">
        <rect x="893.5" y="497.5" width="27" height="19.5" />
        <rect x="815.5" y="604.5" width="27" height="19.5" />
        <rect x="902.5" y="605.5" width="34" height="17" />
        <path d="M904 607.5h14M904 610h14M904 612.5h14M904 615h14M904 617.5h14M904 620h14" strokeWidth="1.5" />
        <rect x="920.5" y="607.5" width="14" height="13" />
        <circle cx="923" cy="617" r="1.5" />
        <path d="M785.5 567v27M950.5 548v27" />
      </g>
      <Burners pts={[[901.5, 502], [912.5, 502], [901.5, 512], [912.5, 512]]} r={2.8} />
      <path d="M816 605l26 18M842 605l-26 18M814 567a29 28 0 0 1-28 27M921.5 548a29 28 0 0 0 29 27" stroke="#7a3a40" />
      <path d="M780 566.5h34M921 547h34M780 594h5.5M950 575h5" stroke="#c018c8" strokeWidth="1.8" />
      <path d="M767 532.5H968M767 590.5H968M966.5 482v17M966.5 622v9" stroke={BLUE} strokeWidth="1.2" strokeDasharray="8 3 2 3" />
      <path d="M767.5 524v9M767.5 590v12" stroke={BLUE} />
      <path d="M960.5 532h8l-4-4.5zM959 590.5h8l-4 4.5z" fill="#d01418" />
      <Section x={767.5} y={520} />
      <Section x={767.5} y={605} />
      <path d="M764 494h17M764 627h6M783 630v9M952 630v9" stroke={LINE} strokeDasharray="4 2" />
      <Bubble x={759.5} y={494} />
      <Bubble x={759.5} y={627} />
      <Bubble x={783} y={644} />
      <Bubble x={952} y={644} />
      <path d="M851 545h10" stroke="#eee" strokeWidth="2.5" strokeDasharray="2 .5" />
      <rect x="850.5" y="547.5" width="12" height="4" fill="#eee" stroke="#c018c8" strokeWidth="1.3" />
      <Label x={844} y={554.5} w={24} />
      <Label x={852} y={557.5} w={8} />
      <Label x={825.5} y={504} w={30} rows={2} />
      <Label x={862.5} y={612.5} w={30} rows={2} />
      <Label x={894} y={586} w={28} rows={2} />
      <Leader d="M893 586.5h-10l-8 13" x={874.5} y={600.5} />
      <HDim x1={790} x2={950.5} y1={480.5} y2={477.5} ticks={[893.5, 920.5]} />
      <HDim x1={785.5} x2={950.5} y1={634} y2={637.5} ticks={[842.5]} />
      <Title x={904} y={648} />
    </g>
  );
}

function Drawing() {
  return (
    <svg viewBox="0 143 1536 657" className="block h-auto w-full" fill="none" aria-label="Model space">
      <defs>
        <pattern id="hatch" width="2" height="2" patternUnits="userSpaceOnUse">
          <rect width="2" height="2" fill="#6d6b6b" />
          <rect width="1" height="1" fill="#a3a1a1" />
        </pattern>
        <pattern id="stone" width="9" height="8" patternUnits="userSpaceOnUse">
          <rect width="9" height="8" fill="#42474b" />
          <path d="M0 1h2M4 0h1M6 2h2M1 4h1M3 3h2M7 5h1M5 6h2M0 7h1M3 6h1M8 7h1" stroke="#a8abac" />
          <path d="M2 2h1M5 4h2M2 7h1M8 4h1" stroke="#1c2228" />
        </pattern>
      </defs>
      <Elevations />
      <PlanLeft />
      <PlanRight />
      {/* UCS icon */}
      <g stroke="#d8d8d8">
        <path d="M15.5 743V783M15.5 783.5H56" />
        <rect x="12.5" y="779.5" width="7" height="7" />
        <path d="M17 729l5 5 5-5M22 734v5M60 771.5l10 10.5M70 771.5l-10 10.5" strokeWidth="1.2" />
      </g>
    </svg>
  );
}

/* ---------- chrome ---------- */

function TitleBar() {
  return (
    <header className="relative flex h-[23px] items-start bg-[#5f2216] pt-1">
      <button aria-label="Application menu" className="absolute left-0 top-1 z-10 flex h-8 w-8 items-start border border-[#2a2a2a] bg-linear-to-b from-[#c4c4c4] to-[#6d6d6d]">
        <svg width="24" height="25" viewBox="0 0 24 25" className="shrink-0" aria-hidden>
          <path d="M1 23L9 1h6l8 22-5-1-2-5-8 1-2 5z" fill="#b01217" />
          <path d="M12 6l2 7-5 2z" fill="#d0c6c6" />
          <path d="M9 1h4L6 23l-5-1z" fill="#e03a3a" />
          <path d="M6 18l11-4 2 3-12 3z" fill="#7d0c10" />
          <path d="M10 22h5l-1-4h-3z" fill="#a9a4a4" />
        </svg>
        <svg width="6" height="4" viewBox="0 0 6 4" className="mt-3.5 shrink-0" aria-hidden><path d="M0 0h6L3 4z" fill="#222" /></svg>
      </button>
      <nav className="ml-8 flex h-[19px] w-[212px] items-center justify-between bg-[#a1a1a1] pl-[7px] pr-1">
        <button aria-label="New"><Ico w={15}><path d="M1 2h8l2 3h4v10H1z" fill="#fff" stroke="none" /></Ico></button>
        <button aria-label="Open"><Ico w={15}><path d="M1 14V3h5l1 2h6v2H5l-3 7z" fill="#f4f4f4" stroke="none" /><path d="M5 8h11l-3 6H2z" fill="#e4e4e4" stroke="#999" strokeWidth=".6" /></Ico></button>
        <button aria-label="Save"><Ico><path d="M1 1h14v14H1z" fill="#f0f0f0" stroke="none" /><path d="M4 1h8v5H4zM4 9h8v6H4z" fill="#b0b0b0" stroke="none" /></Ico></button>
        <button aria-label="Save As"><Ico><path d="M1 1h14v14H1z" fill="#f0f0f0" stroke="none" /><path d="M4 1h8v5H4zM4 9h8v6H4z" fill="#b0b0b0" stroke="none" /><g transform="translate(0 2)"><Pencil /></g></Ico></button>
        <button aria-label="Open from mobile"><Ico><path d="M2 0h9v15H2z" fill="#555" stroke="none" /><path d="M4 2h5v9H4z" fill="#aaa" stroke="none" /><path d="M8 9h3l1 1h3v5H8z" fill={Y} stroke="none" /></Ico></button>
        <button aria-label="Save to mobile"><Ico><path d="M6 1h8v14H6z" fill="#555" stroke="none" /><path d="M7.5 3h5v9h-5z" fill="#ddd" stroke="none" /><path d="M1 5h7M6 2l3 3-3 3" stroke="#3f94d8" strokeWidth="2" /></Ico></button>
        <button aria-label="Plot"><Ico><path d="M4 1h8v4H4zM1 5h14v7H1z" fill="#f4f4f4" stroke="#777" strokeWidth=".6" /><path d="M4 10h8v5H4z" fill={B} stroke="none" /></Ico></button>
        <button aria-label="Undo"><Ico><path d="M4 7c6-2 10 0 11 5" stroke="#fff" strokeWidth="2.2" /><path d="M1 7l6-5v9z" fill="#fff" stroke="none" /></Ico></button>
        <Caret />
        <button aria-label="Redo"><Ico><path d="M12 7C6 5 2 7 1 12" stroke="#bbb" strokeWidth="2.2" /><path d="M15 7L9 2v9z" fill="#bbb" stroke="none" /></Ico></button>
        <Caret />
        <button aria-label="Customize" className="flex flex-col items-center gap-0.5"><span className="h-px w-1.5 bg-white" /><Caret big /></button>
      </nav>
      <h1 className="absolute left-[546px] top-0.5 flex gap-2.5 leading-4 text-[#190c0a]">
        <span>Autodesk AutoCAD 2019</span>
        <span>Detail Pantry.dwg</span>
      </h1>
      <div className="ml-auto flex h-[19px] items-center bg-[#a1a1a1]">
        <button aria-label="Collapse search" className="flex w-[11px] justify-center"><ChevronRight size={9} color="#fff" strokeWidth={4} /></button>
        <input aria-label="Search" placeholder="Type a keyword or phrase" className="h-[18px] w-[145px] border border-[#4a4a4a] bg-[#717171] px-0.5 text-[9px] italic outline-none placeholder:text-[#cfcfcf]" />
        <button aria-label="Find" className="pl-[3px]"><Ico><path d="M3 1h3v3h4V1h3l2 7v6h-5V9H6v5H1V8z" fill="#f4f4f4" stroke="#333" /><path d="M1 9h5M10 9h5" stroke="#333" /></Ico></button>
        <button className="flex items-center gap-1 pl-1.5"><Ico><circle cx="8" cy="5.5" r="4" fill="#eee" stroke="#444" /><path d="M1 15v-3h4l3 1 3-1h4v3z" fill="#eee" stroke="#444" /></Ico>Sign In</button>
        <span className="pl-[39px]"><Caret /></span>
        <button aria-label="Store" className="pl-2"><Ico><path d="M0 2h3l2 8h8l2-6H4" fill="#eee" stroke="#2b3440" strokeWidth="1.5" /><circle cx="6" cy="13" r="1.5" fill="#fff" stroke="#2b3440" /><circle cx="12" cy="13" r="1.5" fill="#fff" stroke="#2b3440" /></Ico></button>
        <button aria-label="Autodesk App" className="flex items-center gap-1 pl-1.5"><Ico><path d="M8 3L3 12h10z" stroke="#2b3440" strokeWidth="1.5" /><circle cx="8" cy="3" r="2" fill="#eee" stroke="#2b3440" /><circle cx="3" cy="12" r="2" fill="#eee" stroke="#2b3440" /><circle cx="13" cy="12" r="2" fill="#eee" stroke="#2b3440" /></Ico><Caret /></button>
        <button aria-label="Help" className="flex items-center gap-1.5 pl-3.5 pr-1"><span className="flex size-[13px] items-center justify-center rounded-full border border-[#333] bg-white text-[10px] font-bold text-[#1f4e80]">?</span><Caret /></button>
      </div>
      <div className="flex w-[132px] items-center justify-end gap-[26px] pr-3 text-[#eee]">
        <button aria-label="Minimize"><Minus size={11} /></button>
        <button aria-label="Restore"><Square size={10} /></button>
        <button aria-label="Close"><X size={12} /></button>
      </div>
    </header>
  );
}

const menuTabs = [
  { name: "Insert", w: "w-[40px]" },
  { name: "Annotate", w: "w-[56px]" },
  { name: "Parametric", w: "w-[62px]" },
  { name: "View", w: "w-[36px]" },
  { name: "Manage", w: "w-[51px]" },
  { name: "Output", w: "w-[48px]" },
  { name: "Add-ins", w: "w-[49px]" },
  { name: "Collaborate", w: "w-[67px]" },
  { name: "Express Tools", w: "w-[70px]" },
  { name: "Featured Apps", w: "w-[80px]" },
];

function MenuTabs() {
  return (
    <nav className="flex h-[17px] items-end border-b border-[#3e3e3e] bg-[#535353] pl-9 text-[#cdcdcd]">
      <button className="h-[15px] w-[42px] border border-b-0 border-[#3c3c3c] bg-[#646464] leading-3 text-white">Home</button>
      {menuTabs.map((t) => (
        <button key={t.name} className={`h-[15px] whitespace-nowrap text-center leading-3 ${t.w}`}>{t.name}</button>
      ))}
      <button aria-label="Minimize ribbon" className="flex h-[15px] items-center gap-1 pl-4">
        <span className="flex h-[7px] w-[11px] items-center justify-center rounded-sm bg-[#eee]"><span className="size-[3px] bg-[#444]" /></span>
        <Caret />
      </button>
    </nav>
  );
}

function LayerRow({ keys, icon, label }: { keys: string[]; icon: string; label: string }) {
  return (
    <div className="flex h-5 items-center gap-[5px] pl-0.5">
      {keys.map((k) => (
        <button key={k} aria-label={k}><Ico>{icons[k]}</Ico></button>
      ))}
      <Small icon={icon} label={label} />
    </div>
  );
}

function Ribbon() {
  return (
    <div className="flex h-[79px] overflow-hidden border-b border-[#7c7c7c] bg-linear-to-b from-[#515454] to-[#343434] text-[#ececec]">
      <Panel title="Draw" w="w-[182px]">
        <Big icon="line" label="Line" w="w-[34px]" />
        <Big icon="polyline" label="Polyline" w="w-[37px]" />
        <Big icon="circle" label="Circle" caret w="w-[44px]" />
        <Big icon="arc" label="Arc" caret w="w-[31px]" />
        <Stack w="w-[28px] ml-1">
          <Small icon="rect" caret /><Small icon="ellipse" caret /><Small icon="hatch" caret />
        </Stack>
      </Panel>
      <Panel title="Modify" w="w-[203px]">
        <Stack w="w-[58px] ml-[5px]"><Small icon="move" label="Move" /><Small icon="copy" label="Copy" /><Small icon="stretch" label="Stretch" /></Stack>
        <Stack w="w-[56px]"><Small icon="rotate" label="Rotate" /><Small icon="mirror" label="Mirror" /><Small icon="scale" label="Scale" /></Stack>
        <Stack w="w-[51px]"><Small icon="trim" label="Trim" caret /><Small icon="fillet" label="Fillet" caret /><Small icon="array" label="Array" caret /></Stack>
        <Stack w="w-[18px] ml-2.5"><Small icon="erase" /><Small icon="explode" /><Small icon="offset" /></Stack>
      </Panel>
      <Panel title="Annotation" w="w-[153px]">
        <Big icon="text" label="Text" caret w="w-[36px]" />
        <Big icon="dim" label="Dimension" w="w-[50px]" />
        <Stack w="w-[55px] ml-1"><Small icon="linear" label="Linear" caret /><Small icon="leader" label="Leader" caret /><Small icon="table" label="Table" /></Stack>
      </Panel>
      <Panel title="Layers" w="w-[221px]">
        <Big icon="layerProps" label="Layer Properties" w="w-[50px]" />
        <div className="flex min-w-0 grow flex-col pr-0.5 pt-1">
          <Combo label="Layer" value="0">
            <div className="flex w-[66px] items-center justify-between pl-0.5 pr-1">
              <Ico w={13}><circle cx="8" cy="6" r="5" fill={Y} stroke="none" /><path d="M6 11h4v4H6z" fill="#eee" stroke="none" /></Ico>
              <Ico w={13}><Sun cx={8} cy={8} r={3.5} /></Ico>
              <Ico w={13}><rect x="2" y="7" width="9" height="8" fill={Y} stroke="none" /><path d="M8 7V2h6v4" stroke={Y} strokeWidth="2" /></Ico>
              <span className="size-[11px] border border-black bg-white" />
            </div>
          </Combo>
          <LayerRow keys={["layerOff", "layerIsolate", "layerFreeze", "layerLock"]} icon="makeCurrent" label="Make Current" />
          <LayerRow keys={["layerOn", "layerUnisolate", "layerThaw", "layerUnlock"]} icon="matchLayer" label="Match Layer" />
        </div>
      </Panel>
      <Panel title="Block" w="w-[129px]">
        <Big icon="insert" label="Insert" caret w="w-[32px]" />
        <Stack w="w-[88px] ml-[3px]"><Small icon="create" label="Create" /><Small icon="edit" label="Edit" /><Small icon="editAttr" label="Edit Attributes" caret /></Stack>
      </Panel>
      <Panel title="Properties" w="w-[215px]" launcher>
        <Big icon="match" label="Match Properties" w="w-[50px]" />
        <Stack w="w-[17px]"><Small icon="wheel" /><Small icon="weights" /><Small icon="types" /></Stack>
        <div className="flex min-w-0 grow flex-col gap-px pr-px pt-1">
          <Combo label="Color" value="ByLayer"><span className="ml-2.5 mr-[7px] size-[13px] border border-[#777] bg-[#2a1210]" /></Combo>
          <Combo label="Lineweight" value="ByLayer"><span className="mx-px h-px w-[52px] bg-[#d5d5d5]" /></Combo>
          <Combo label="Linetype" value="BYLAYER"><span className="mx-px h-0.5 w-[52px] bg-[#aaa]" /></Combo>
        </div>
      </Panel>
      <Panel title="Groups" w="w-[56px]">
        <Big icon="group" label="Group" w="w-[34px]" />
        <Stack w="w-[18px]">
          <Small icon="ungroup" /><Small icon="groupEdit" />
          <span className="flex bg-[#5b86b8] pl-px"><Small icon="groupSel" /></span>
        </Stack>
      </Panel>
      <Panel title="Utilities" w="w-[79px]">
        <Big icon="measure" label="Measure" caret w="w-[56px]" />
        <Stack w="w-[18px] ml-[3px]"><Small icon="quick" /><Small icon="selall" /><Small icon="calc" /></Stack>
      </Panel>
      <Panel title="Clipboard" w="w-[65px]" caret={false}>
        <Big icon="paste" label="Paste" caret w="w-[42px]" />
        <Stack w="w-[18px] ml-0.5"><Small icon="cut" /><Small icon="clip" /></Stack>
      </Panel>
      <Panel title="View" w="w-[49px]" launcher>
        <Big icon="base" label="Base" caret w="w-[48px]" />
      </Panel>
    </div>
  );
}

function FileTabs() {
  const shape = "[clip-path:polygon(0_100%,5%_30%,8%_0,94%_0,98%_30%,100%_100%)]";
  return (
    <nav className="flex h-[24px] items-end border-b-[3px] border-[#5c5c5c] bg-[#383838] pl-[13px] text-[#b4b4b4]">
      <button className={`h-[18px] w-[104px] bg-linear-to-b from-[#606060] to-[#484848] pl-3 text-left ${shape}`}>Start</button>
      <button className={`flex h-[18px] w-[101px] items-center justify-between bg-linear-to-b from-[#606060] to-[#484848] pl-[7px] pr-2.5 ${shape}`}>Detail Deck*<X size={9} color="#333" strokeWidth={3} /></button>
      <button className={`-ml-1 flex h-[18px] w-[103px] items-center justify-between bg-linear-to-b from-[#8a8a8a] to-[#585858] pl-[10px] pr-2.5 text-white ${shape}`}>Detail Pantry*<X size={9} color="#444" strokeWidth={3} /></button>
      <button aria-label="New tab" className="mb-0.5 ml-1 flex h-3 w-[18px] items-center justify-center rounded-md bg-[#565656]"><Plus size={9} color="#ddd" strokeWidth={3} /></button>
    </nav>
  );
}

function ViewCube() {
  const dir = "absolute font-['Liberation_Sans',sans-serif] text-[17px] font-bold leading-4 text-[#a9abac]";
  return (
    <div className="absolute right-[17px] top-[37px] size-[98px]">
      <div className="size-full rounded-full border-[10px] border-[#454b51]" />
      <span className={`${dir} -top-1 left-[43px]`}>N</span>
      <span className={`${dir} left-[43px] top-[87px]`}>S</span>
      <span className={`${dir} -left-1.5 top-[41px]`}>W</span>
      <span className={`${dir} left-[88px] top-[41px]`}>E</span>
      <button className="absolute left-[28px] top-[28px] flex size-[42px] items-center justify-center border border-[#8b8d8d] bg-[#b3b5b5]">
        <span className="flex size-[27px] items-center justify-center bg-[#a4a6a7] font-bold text-[#4a4f54]">TOP</span>
      </button>
      <button className="absolute left-[29px] top-[120px] flex h-[14px] w-[39px] items-center justify-between rounded border border-[#aeb0b1] bg-[#8f9192] px-[3px] text-[9px] text-[#d8d8d8]">
        WCS
        <Caret big />
      </button>
    </div>
  );
}

function NavBar() {
  return (
    <div className="absolute right-[3px] top-[191px] flex h-[171px] w-[26px] flex-col items-center justify-between rounded bg-[#62666a] py-3.5">
      {[
        <><circle cx="10" cy="10" r="8.5" /><circle cx="10" cy="10" r="5" /><path d="M15 2h4v8" /></>,
        <path d="M7 19c-2-3-4-5-6-8 1-1.500 3 0 4 1L3.500 5c0-1.500 1.500-1.500 2 0L7 10V2.500c0-1.500 2-1.500 2 0V10l2-7.500c.5-1.500 2-1 2 .5L12 10.500l3-5c1-1 2 0 1.500 1L14 13c0 3-1 4-2 6z" />,
        <><path d="M2 2l10 10M12 2L2 12M2 5V2h3M9 2h3v3M2 9v3h3" /><circle cx="14" cy="14" r="3.5" /><path d="M16.5 16.5l3 3" strokeWidth="2" /></>,
        <><path d="M9 19V4H7l3-3 3 3h-2v15z" /><ellipse cx="10" cy="11" rx="9" ry="3.5" /></>,
        <><path d="M1 1h4v4H1zM8 1h4v4H8zM15 1h4v4h-4zM1 8h12v10H1z" /><path d="M5 10l5 3-5 3z" fill="#3f4449" /></>,
      ].map((shape, i) => (
        <button key={i} aria-label={`Navigation ${i + 1}`}>
          <svg width="20" height="20" viewBox="0 0 20 20" fill="none" stroke="#464b50" strokeWidth="1.2">{shape}</svg>
        </button>
      ))}
    </div>
  );
}

function CommandWindow() {
  const line = "w-fit bg-[#54595e] px-0.5 leading-[13px]";
  return (
    <div className="absolute bottom-0 left-[310px] right-[311px] font-['DejaVu_Sans_Mono',monospace] text-[9px]">
      <div className="mb-[3px] ml-[50px] flex flex-col gap-[3px] whitespace-pre">
        <span className={`${line} text-[#b9bbbd]`}>Command: *Cancel*</span>
        <span className={`${line} text-[#d0d2d3]`}>{"Command:   <Switching to: Model>"}</span>
        <span className={`${line} text-white`}>Regenerating model - caching viewports.</span>
      </div>
      <div className="flex h-[21px] items-center bg-[#bcbec0]">
        <div className="flex h-full w-[45px] items-center justify-between bg-[#6b6e70] pl-1 pr-1.5">
          <span className="h-3 w-1 border-x border-dotted border-[#ccc]" />
          <button aria-label="Close"><X size={12} color="#e6e6e6" /></button>
          <button aria-label="Customize"><Wrench size={11} color="#ddd" /></button>
        </div>
        <button aria-label="Recent commands" className="flex items-center gap-0.5 pl-1">
          <Ico w={13}><rect x="1" y="2" width="14" height="12" fill="#6c7074" stroke="#3c3f42" /><path d="M3 6l3 2-3 2M8 11h4" stroke="#eee" /></Ico>
          <svg width="4" height="3" viewBox="0 0 6 4" aria-hidden><path d="M0 0h6L3 4z" fill="#444" /></svg>
        </button>
        <input aria-label="Command line" placeholder="Type a command" className="ml-1.5 min-w-0 grow bg-transparent italic outline-none placeholder:text-[#6d6f71]" />
        <button aria-label="History" className="pr-[3px]"><svg width="6" height="4" viewBox="0 0 6 4" aria-hidden><path d="M0 4h6L3 0z" fill="#222" /></svg></button>
      </div>
    </div>
  );
}

function St({ w = "w-5", on, label, children }: { w?: string; on?: boolean; label: string; children: ReactNode }) {
  return (
    <button aria-label={label} className={`flex h-[18px] items-center justify-center ${w} ${on ? "bg-[#5b8cc0]" : ""}`}>
      {children}
    </button>
  );
}

function Group({ children }: { children: ReactNode }) {
  return <div className="flex h-[21px] items-center border border-[#737373] bg-[#4c4d4e]">{children}</div>;
}

const person = <path d="M8 1l2 6 5 8-7-3-7 3 5-8z" fill="#e8e8e8" stroke="none" />;

function StatusBar() {
  return (
    <footer className="flex h-[25px] items-start justify-between border-b-2 border-[#3a1210] bg-[#333435] text-[#e6e6e6]">
      <nav className="flex items-center pl-2.5">
        <button className="h-[15px] w-[44px] rounded-b-lg bg-[#6c6c6c] font-bold leading-[14px] text-white">Model</button>
        <button className="ml-0.5 h-[15px] w-[49px] rounded-b-lg bg-[#4a4a4a] leading-[14px] text-[#b8b8b8]">Layout1</button>
        <button aria-label="New layout" className="ml-1.5 flex h-[13px] w-[18px] items-center justify-center rounded-b-lg bg-[#4a4a4a]"><Plus size={9} strokeWidth={3} /></button>
      </nav>
      <div className="flex gap-px pt-px">
        <Group><St w="w-[38px]" label="Model space">MODEL</St></Group>
        <Group>
          <St w="w-[18px]" label="Grid"><Ico><path d="M4 1v14M8 1v14M12 1v14M1 4h14M1 8h14M1 12h14" /></Ico></St>
          <St label="Snap"><Ico><path d="M2 3h13M2 8h13M2 13h13" strokeDasharray="2 3" strokeWidth="2" /></Ico></St>
          <St w="w-3" label="Snap options"><Caret big /></St>
        </Group>
        <Group>
          <St w="w-[18px]" label="Ortho"><Ico><path d="M2 1v13h13M2 9h5v5" /></Ico></St>
          <St on label="Polar"><Ico><circle cx="7" cy="9" r="6" stroke="#fff" /><path d="M7 9h9M7 9l6-8" stroke="#fff" /></Ico></St>
          <St w="w-3" label="Polar options"><Caret big /></St>
          <St label="Isometric"><Ico><path d="M8 1v14" stroke="#35b8c0" strokeWidth="1.5" /><path d="M1 3l14 12" stroke="#b86060" strokeWidth="1.5" /></Ico></St>
          <St w="w-3" label="Isometric options"><Caret big /></St>
          <span className="w-0.5" />
          <St w="w-[18px]" on label="Tracking"><Ico><path d="M13 1L2 14h13" stroke="#fff" /></Ico></St>
          <span className="w-0.5" />
          <St w="w-[18px]" on label="Object snap"><Ico><rect x="3" y="4" width="11" height="11" stroke="#fff" /><rect x="1" y="1" width="4" height="4" fill="#5b8cc0" stroke="#fff" /></Ico></St>
          <St w="w-3" label="Snap modes"><Caret big /></St>
        </Group>
        <Group>
          <St w="w-[18px]" on label="Annotation visibility"><Ico>{person}<circle cx="12.5" cy="4" r="2.2" stroke="#fff" /></Ico></St>
          <St label="Auto scale"><Ico>{person}<path d="M14 1l-3 4h3l-3 4" stroke="#eee" /></Ico></St>
          <St w="w-[18px]" label="Annotation scale"><Ico>{person}</Ico></St>
          <button className="flex w-[28px] items-center justify-center gap-1">1:1<Caret big /></button>
        </Group>
        <Group>
          <St w="w-[18px]" label="Workspace"><FaCog size={12} /></St>
          <St w="w-[14px]" label="Workspace options"><Caret big /></St>
        </Group>
        <Group><St w="w-[18px]" label="Annotation monitor"><Plus size={17} strokeWidth={2} /></St></Group>
        <Group><St label="Isolate"><Ico><rect x="1" y="1" width="5" height="5" /><circle cx="12" cy="6" r="2.7" /><path d="M7 10l3 5H4z" /></Ico></St></Group>
        <Group>
          <St w="w-[19px]" label="Performance"><Ico><path d="M1 1h7l4 4v9H1z" fill="#cfe2f4" stroke="none" /><path d="M2 5h8M2 8h8M5 2v10" stroke="#3f94d8" /><path d="M1 9h6v6H1z" fill={Y} stroke="none" /><path d="M8 11l3 3 5-6" stroke="#28b038" strokeWidth="2" /></Ico></St>
          <St w="w-[19px]" label="Warnings"><Ico><path d="M1 1h13v11H1z" fill="#eee" stroke="none" /><path d="M2 10l3-6 4 6 3-6" stroke="#555" /><path d="M12 7l4 8H8z" fill={R} stroke="none" /></Ico></St>
        </Group>
        <Group>
          <St w="w-[19px]" label="Clean screen"><Ico><rect x="1" y="2" width="14" height="12" /><path d="M4 11V8l3 3zM12 5v3L9 5z" fill={G} /></Ico></St>
          <St w="w-[19px]" label="Customization"><Ico><path d="M1 3h14M1 8h14M1 13h14" strokeWidth="1.7" /></Ico></St>
        </Group>
      </div>
    </footer>
  );
}

export default function App() {
  return (
    <div className="flex h-screen flex-col overflow-hidden bg-[#212830] font-[Roboto,'Open_Sans',sans-serif] text-[10px] text-[#e6e6e6]">
      <TitleBar />
      <MenuTabs />
      <Ribbon />
      <FileTabs />
      <main className="relative min-h-0 grow overflow-hidden bg-[#212830]">
        <Drawing />
        <div className="absolute left-0.5 top-1 leading-4">[−][Top][2D Wireframe]</div>
        <div className="absolute right-2 top-[7px] flex gap-1.5 text-white">
          <button aria-label="Minimize drawing" className="pt-0.5"><Minus size={10} strokeWidth={5} /></button>
          <button aria-label="Restore drawing"><Ico w={10}><path d="M4 5V2h10v9h-3" stroke="#fff" strokeWidth="2" /><rect x="2" y="6" width="8" height="8" stroke="#fff" strokeWidth="2.5" /></Ico></button>
          <button aria-label="Close drawing"><X size={10} strokeWidth={4} /></button>
        </div>
        <ViewCube />
        <NavBar />
        <CommandWindow />
      </main>
      <StatusBar />
    </div>
  );
}
